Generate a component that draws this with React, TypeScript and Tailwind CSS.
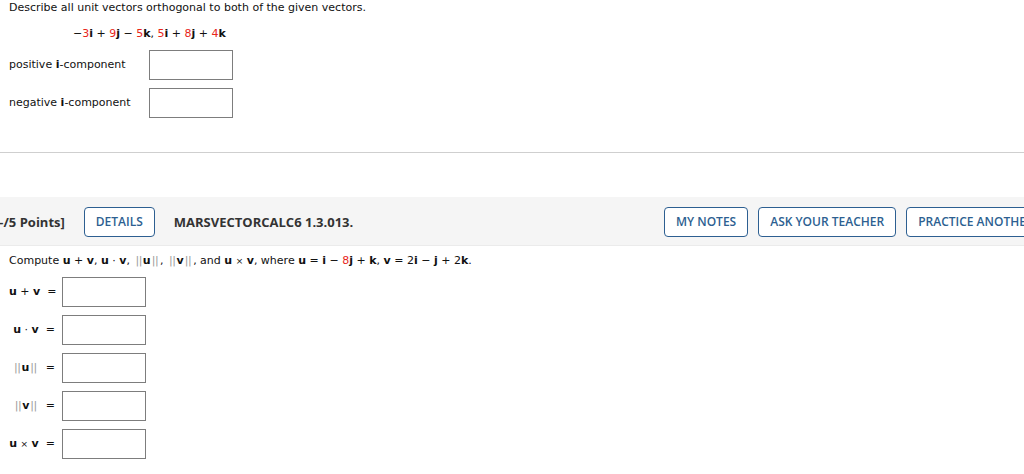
import React from "react";

const R = ({ children }: { children: React.ReactNode }) => (
  <span className="text-[#e8261c]">{children}</span>
);
const B = ({ children }: { children: React.ReactNode }) => (
  <span className="font-bold">{children}</span>
);
const Norm = ({ children }: { children: React.ReactNode }) => (
  <span className="mx-[2px]">
    <span className="text-[#9a9a9a] font-normal tracking-[-0.5px]">||</span>
    <span className="font-bold mx-[1px]">{children}</span>
    <span className="text-[#9a9a9a] font-normal tracking-[-0.5px]">||</span>
  </span>
);

const Box = () => (
  <div className="w-[84px] h-[30px] border border-[#7d7d7d] bg-white shrink-0" />
);

const Btn = ({ children }: { children: React.ReactNode }) => (
  <div className="h-[30px] px-[11px] flex items-center border border-[#2d5f91] rounded-[4px] text-[#2d5f91] text-[12px] font-semibold bg-white shrink-0 whitespace-nowrap">
    {children}
  </div>
);

export default function App() {
  const mathRows: React.ReactNode[] = [
    <>
      <B>u</B> + <B>v</B>{"  "}=
    </>,
    <>
      <B>u</B> · <B>v</B>{"  "}=
    </>,
    <>
      <Norm>u</Norm>{"  "}=
    </>,
    <>
      <Norm>v</Norm>{"  "}=
    </>,
    <>
      <B>u</B> <span className="text-[9px]">×</span> <B>v</B>{"  "}=
    </>,
  ];
  return (
    <div
      className="w-[1024px] h-[474px] overflow-hidden bg-white text-[11px] leading-[14px] text-[#111]"
      style={{ fontFamily: '"DejaVu Sans", Verdana, sans-serif' }}
    >
      <div className="pl-[9px]">
        <p className="pt-[1px] whitespace-nowrap">
          Describe all unit vectors orthogonal to both of the given vectors.
        </p>
        <p className="mt-[12px] pl-[64px] whitespace-nowrap">
          −<R>3</R>
          <B>i</B> + <R>9</R>
          <B>j</B> − <R>5</R>
          <B>k</B>, <R>5</R>
          <B>i</B> + <R>8</R>
          <B>j</B> + <R>4</R>
          <B>k</B>
        </p>
        <div className="mt-[9px] flex flex-col gap-[8px]">
          <div className="flex items-center">
            <div className="w-[140px]">
              positive <B>i</B>-component
            </div>
            <Box />
          </div>
          <div className="flex items-center">
            <div className="w-[140px]">
              negative <B>i</B>-component
            </div>
            <Box />
          </div>
        </div>
      </div>
      <div className="mt-[34px] h-px bg-[#cfcfcf]" />
      <div className="mt-[44px] h-[49px] bg-[#f5f5f5] border-b border-[#ebebeb] overflow-hidden">
        <div
          className="h-full flex items-center pt-[1px]"
          style={{ fontFamily: '"Open Sans", sans-serif' }}
        >
          <div className="w-[664px] shrink-0 flex items-center">
            <div className="text-[13px] font-bold text-[#333] whitespace-nowrap -ml-[3px]">
              –/5 Points]
            </div>
            <div className="ml-[19px]">
              <Btn>DETAILS</Btn>
            </div>
            <div className="ml-[19px] text-[13px] font-bold text-[#333] whitespace-nowrap">
              MARSVECTORCALC6 1.3.013.
            </div>
          </div>
          <div className="flex gap-[10px] shrink-0">
            <Btn>MY NOTES</Btn>
            <Btn>ASK YOUR TEACHER</Btn>
            <Btn>PRACTICE ANOTHER</Btn>
          </div>
        </div>
      </div>
      <div className="pl-[9px]">
        <p className="mt-[8px] whitespace-nowrap">
          Compute <B>u</B> + <B>v</B>, <B>u</B> · <B>v</B>, <Norm>u</Norm>,{" "}
          <Norm>v</Norm>, and <B>u</B> <span className="text-[9px]">×</span>{" "}
          <B>v</B>, where <B>u</B> = <B>i</B> − <R>8</R>
          <B>j</B> + <B>k</B>, <B>v</B> = 2<B>i</B> − <B>j</B> + 2<B>k</B>.
        </p>
        <div className="mt-[9px] flex flex-col gap-[8px]">
          {mathRows.map((lbl, i) => (
            <div key={i} className="flex items-center">
              <div className="w-[46px] text-right mr-[7px] whitespace-pre">
                {lbl}
              </div>
              <Box />
            </div>
          ))}
        </div>
      </div>
    </div>
  );
}
